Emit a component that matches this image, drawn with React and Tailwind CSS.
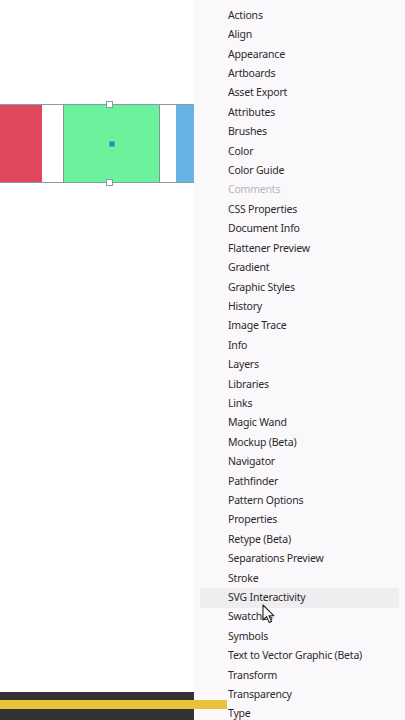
const PANELS = [
  "Actions",
  "Align",
  "Appearance",
  "Artboards",
  "Asset Export",
  "Attributes",
  "Brushes",
  "Color",
  "Color Guide",
  "Comments",
  "CSS Properties",
  "Document Info",
  "Flattener Preview",
  "Gradient",
  "Graphic Styles",
  "History",
  "Image Trace",
  "Info",
  "Layers",
  "Libraries",
  "Links",
  "Magic Wand",
  "Mockup (Beta)",
  "Navigator",
  "Pathfinder",
  "Pattern Options",
  "Properties",
  "Retype (Beta)",
  "Separations Preview",
  "Stroke",
  "SVG Interactivity",
  "Swatches",
  "Symbols",
  "Text to Vector Graphic (Beta)",
  "Transform",
  "Transparency",
  "Type",
];

const DISABLED = ["Comments"];
const HOVERED = "SVG Interactivity";

function Pointer() {
  return (
    <svg
      width="14"
      height="20"
      viewBox="0 0 14 20"
      className="pointer-events-none absolute left-[262px] top-[604px]"
    >
      <path
        d="M1 1 L1 16 L4.6 12.6 L7.2 18.6 L9.6 17.6 L7 11.8 L12 11.8 Z"
        fill="#ffffff"
        stroke="#222222"
        strokeWidth="1.1"
        strokeLinejoin="round"
      />
    </svg>
  );
}

function Canvas() {
  return (
    <div className="relative h-full w-[194px] shrink-0 overflow-hidden bg-white">
      <div className="flex h-full flex-col">
        <div className="h-[104px]" />
        {/* artboard strip */}
        <div className="relative flex h-[79px] border-y border-[#8a9aa8]">
          <div className="w-[42px] bg-[#e2485d]" />
          <div className="w-[21px] bg-white" />
          <div className="relative w-[97px] border-x border-[#7d95a0] bg-[#6cf29c]">
            <div className="absolute left-1/2 top-1/2 h-[5px] w-[5px] -translate-x-1/2 -translate-y-1/2 bg-[#2f7fc2]" />
            <div className="absolute -top-[4px] left-[42px] h-[7px] w-[7px] border border-[#8a9aa8] bg-white" />
            <div className="absolute -bottom-[4px] left-[42px] h-[7px] w-[7px] border border-[#8a9aa8] bg-white" />
          </div>
          <div className="w-[16px] bg-white" />
          <div className="flex-1 bg-[#66b3e6]" />
        </div>
        <div className="flex-1" />
        <div className="flex h-[28px] flex-col bg-[#333333]" />
      </div>
    </div>
  );
}

export default function App() {
  return (
    <div
      className="relative flex h-[720px] w-[405px] overflow-hidden bg-white"
      style={{ fontFamily: '"Noto Sans", "Open Sans", sans-serif' }}
    >
      <Canvas />
      <div className="flex flex-1 flex-col bg-[#fbf8fb] px-[6px] pt-[6px]">
        {PANELS.map((name) => (
          <div
            key={name}
            className={`flex h-[19.42px] shrink-0 items-center pl-[28px] text-[10.5px] tracking-[-0.2px] ${
              name === HOVERED ? "bg-[#efedf0]" : ""
            } ${DISABLED.includes(name) ? "text-[#b8b4b8]" : "text-[#2a2a2a]"}`}
          >
            {name}
          </div>
        ))}
      </div>
      {/* highlight stripe along the bottom toolbar */}
      <div className="absolute left-0 top-[700px] h-[9px] w-[227px] bg-[#e8c23a]" />
      <Pointer />
    </div>
  );
}
